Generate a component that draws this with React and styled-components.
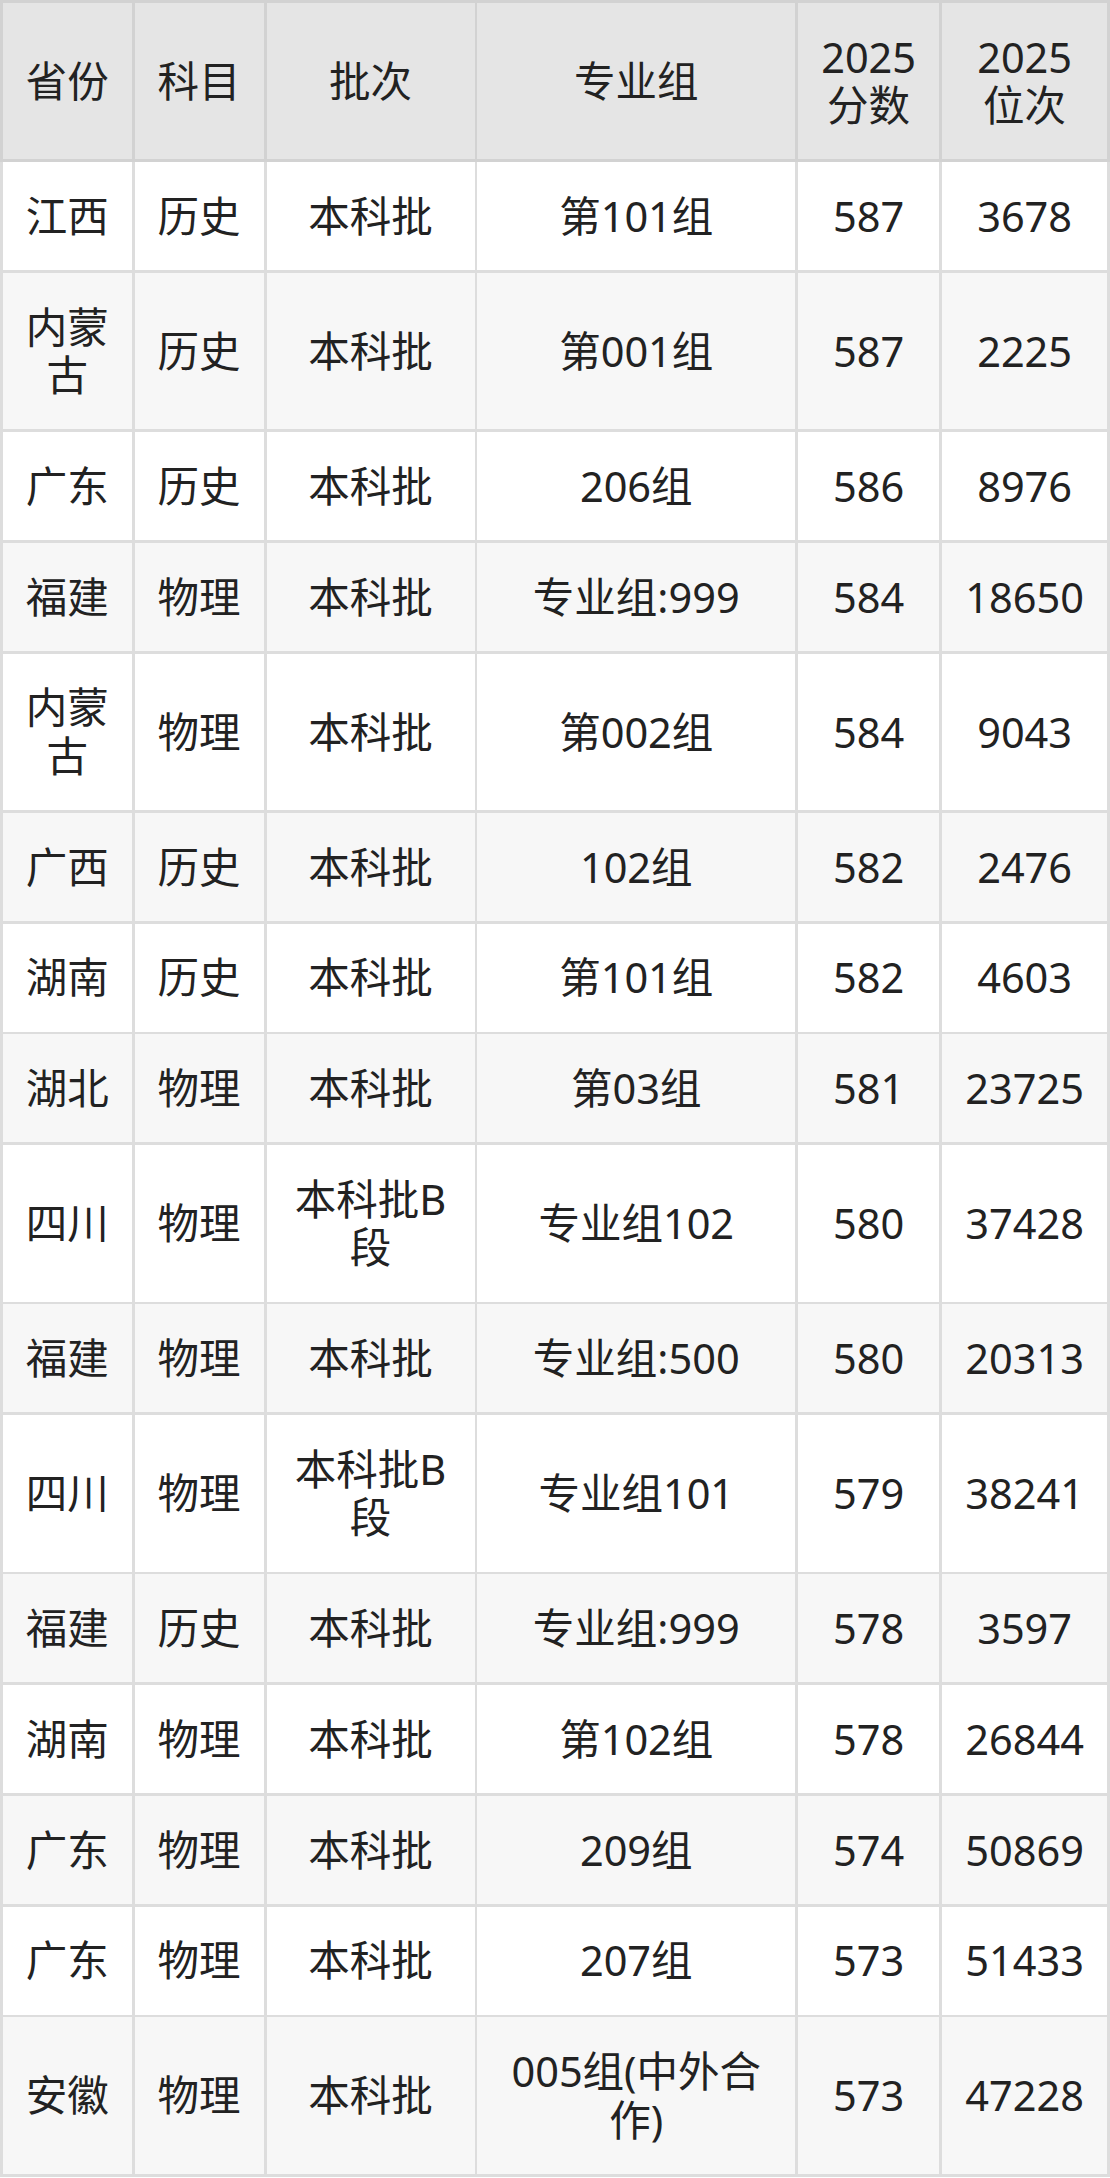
import React from "react";
import styled, { createGlobalStyle } from "styled-components";

const Global = createGlobalStyle`
  html, body { margin: 0; padding: 0; background: #ffffff; }
  body {
    font-family: "Noto Sans", "Noto Sans CJK SC", sans-serif;
    color: #222222;
  }
`;

const COLS = "129px 129.25px 208px 318px 141.25px 165.25px";
const LINE = "2.75px";

const Table = styled.div`
  width: 1110px;
  display: flex;
  flex-direction: column;
`;

const HeaderRow = styled.div`
  display: grid;
  grid-template-columns: ${COLS};
  column-gap: ${LINE};
  padding: ${LINE};
  background: #d2d2d2;
`;

const Body = styled.div`
  display: flex;
  flex-direction: column;
  gap: ${LINE};
  padding: 0 ${LINE} ${LINE};
  background: #dddddd;
`;

const Row = styled.div`
  display: grid;
  grid-template-columns: ${COLS};
  column-gap: ${LINE};
`;

const Cell = styled.div`
  display: flex;
  align-items: center;
  justify-content: center;
  text-align: center;
  padding: 29.75px 18px;
  font-size: 41.5px;
  line-height: 48.5px;
  color: #222222;
  background: ${(p) => (p.$head ? "#e5e5e5" : p.$alt ? "#f7f7f7" : "#ffffff")};
`;

const headers = [
  "省份",
  "科目",
  "批次",
  "专业组",
  ["2025", "分数"],
  ["2025", "位次"],
];

const rows = [
  ["江西", "历史", "本科批", "第101组", "587", "3678"],
  ["内蒙古", "历史", "本科批", "第001组", "587", "2225"],
  ["广东", "历史", "本科批", "206组", "586", "8976"],
  ["福建", "物理", "本科批", "专业组:999", "584", "18650"],
  ["内蒙古", "物理", "本科批", "第002组", "584", "9043"],
  ["广西", "历史", "本科批", "102组", "582", "2476"],
  ["湖南", "历史", "本科批", "第101组", "582", "4603"],
  ["湖北", "物理", "本科批", "第03组", "581", "23725"],
  ["四川", "物理", "本科批B段", "专业组102", "580", "37428"],
  ["福建", "物理", "本科批", "专业组:500", "580", "20313"],
  ["四川", "物理", "本科批B段", "专业组101", "579", "38241"],
  ["福建", "历史", "本科批", "专业组:999", "578", "3597"],
  ["湖南", "物理", "本科批", "第102组", "578", "26844"],
  ["广东", "物理", "本科批", "209组", "574", "50869"],
  ["广东", "物理", "本科批", "207组", "573", "51433"],
  ["安徽", "物理", "本科批", "005组(中外合作)", "573", "47228"],
];

export default function App() {
  return (
    <>
      <Global />
      <Table>
        <HeaderRow>
          {headers.map((h, i) => (
            <Cell key={i} $head>
              {Array.isArray(h) ? (
                <span>
                  {h[0]}
                  <br />
                  {h[1]}
                </span>
              ) : (
                h
              )}
            </Cell>
          ))}
        </HeaderRow>
        <Body>
          {rows.map((r, ri) => (
            <Row key={ri}>
              {r.map((c, ci) => (
                <Cell key={ci} $alt={ri % 2 === 1}>
                  {c}
                </Cell>
              ))}
            </Row>
          ))}
        </Body>
      </Table>
    </>
  );
}
